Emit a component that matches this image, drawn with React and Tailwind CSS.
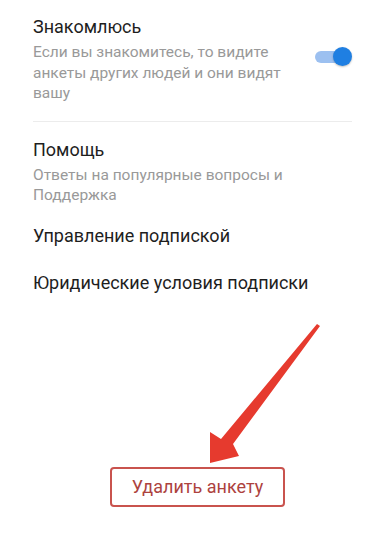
import React from "react";

export default function App() {
  return (
    <div className="relative w-[384px] h-[560px] bg-white overflow-hidden" style={{ fontFamily: "Roboto, 'Noto Sans', sans-serif" }}>
      <div className="pl-[33px] pr-[32px] pt-[15px]">
        <div className="text-[18px] leading-[24px] text-[#1e1e1e]">Знакомлюсь</div>
        <div className="mt-[3px] flex items-start justify-between">
          <div className="text-[15.5px] leading-[20.5px] text-[#999999]">
            Если вы знакомитесь, то видите
            <br />
            анкеты других людей и они видят
            <br />
            вашу
          </div>
          <div className="relative mt-[5px] w-[37px] h-[20px] flex items-center">
            <div className="w-[30px] h-[12px] rounded-full bg-[#9cc0f0]" />
            <div className="absolute right-0 top-0 w-[19px] h-[19px] rounded-full bg-[#1f7fe2] shadow-[0_1px_2px_rgba(0,0,0,0.25)]" />
          </div>
        </div>
        <div className="mt-[17px] h-px bg-[#ececec]" />

        <div className="mt-[16px] text-[18px] leading-[24px] text-[#1e1e1e]">Помощь</div>
        <div className="mt-[3px] text-[15.5px] leading-[20px] text-[#999999]">
          Ответы на популярные вопросы и
          <br />
          Поддержка
        </div>

        <div className="mt-[19px] text-[18px] leading-[24px] text-[#1e1e1e]">Управление подпиской</div>
        <div className="mt-[23px] text-[18px] leading-[24px] text-[#1e1e1e]">Юридические условия подписки</div>
      </div>

      <div className="mt-[172px] ml-[110px] w-[175px] h-[40px] border-2 border-[#c9534e] rounded-[4px] flex items-center justify-center text-[18px] text-[#ad423e]">
        Удалить анкету
      </div>

      <svg className="absolute left-0 top-0" width="384" height="560" viewBox="0 0 384 560">
        <polygon
          points="317,324 320,326 233,444 239,456 210,463 210,432 221,439"
          fill="#e63a2e"
        />
      </svg>
    </div>
  );
}
